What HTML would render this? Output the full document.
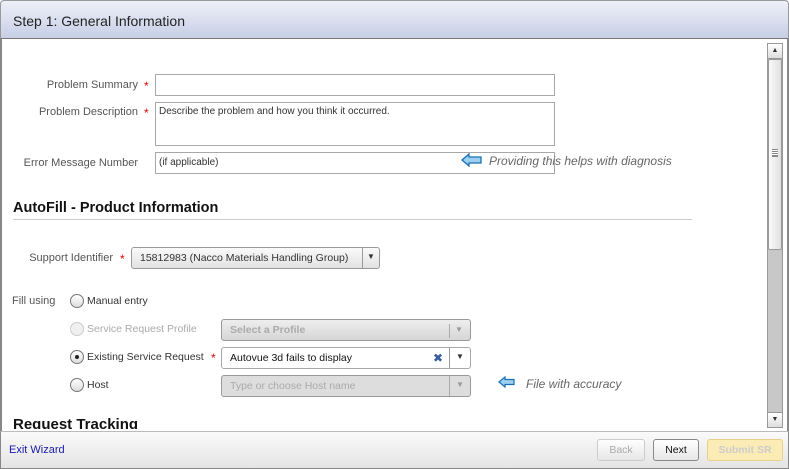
<!DOCTYPE html>
<html><head><style>
*{box-sizing:border-box;margin:0;padding:0}
body{width:789px;height:469px;overflow:hidden;background:#fff;font-family:"Liberation Sans",Arial,sans-serif;font-size:11px;color:#333;position:relative}
.a{position:absolute}
.lbl{position:absolute;color:#555;text-align:right;font-size:11px}
.star{position:absolute;color:#d00;font-size:12px}
.inp{position:absolute;border:1px solid #a8a8a8;background:#fff;font-size:10px;padding:3px 3px;color:#333}
.sel{position:absolute;border:1px solid #999;border-radius:3px;font-size:10.5px;padding:4px 8px;background:linear-gradient(#fafafa,#e2e2e2)}
.btn{position:absolute;border:1px solid #888;border-radius:3px;font-size:10.5px;text-align:center;line-height:20px;background:linear-gradient(#fff,#e6e6e6)}
.radio{position:absolute;width:14px;height:14px;border-radius:50%;border:1px solid #777;background:linear-gradient(#fff,#ddd)}
.rl{position:absolute;font-size:10.5px}
</style></head><body>
<div class="a" style="left:0;top:0;width:789px;height:39px;background:linear-gradient(#eef0f8,#c7cfe6);border:1px solid #999;border-bottom:1px solid #777;border-radius:4px 4px 0 0"></div>
<div class="a" style="left:13px;top:13px;font-size:14px;color:#222">Step 1: General Information</div>
<div class="a" style="left:0;top:39px;width:2px;height:393px;background:#888"></div>
<div class="a" style="left:787px;top:39px;width:2px;height:393px;background:#888"></div>

<div class="lbl" style="left:20px;top:79px;width:118px">Problem Summary</div><div class="star" style="left:144px;top:79px">*</div>
<div class="inp" style="left:155px;top:74px;width:400px;height:22px"></div>
<div class="lbl" style="left:20px;top:106px;width:118px">Problem Description</div><div class="star" style="left:144px;top:106px">*</div>
<div class="inp" style="left:155px;top:102px;width:400px;height:44px">Describe the problem and how you think it occurred.</div>
<div class="lbl" style="left:10px;top:157px;width:128px">Error Message Number</div>
<div class="inp" style="left:155px;top:152px;width:400px;height:22px;padding-top:4px">(if applicable)</div>
<svg class="a" style="left:461px;top:153px" width="22" height="14"><path d="M1 7 L8 1 V4 H20 V10 H8 V13 Z" fill="#9cd0f0" stroke="#1a6fb5" stroke-width="1.3"/></svg>
<div class="a" style="left:489px;top:154px;font-style:italic;color:#666;font-size:12px">Providing this helps with diagnosis</div>

<div class="a" style="left:13px;top:200px;font-size:14.5px;font-weight:bold;color:#111">AutoFill - Product Information</div>
<div class="a" style="left:13px;top:219px;width:679px;height:1px;background:#ccc"></div>

<div class="lbl" style="left:10px;top:252px;width:103px">Support Identifier</div><div class="star" style="left:120px;top:252px">*</div>
<div class="sel" style="left:131px;top:247px;width:249px;height:22px">15812983 (Nacco Materials Handling Group)</div>
<div class="a" style="left:362px;top:248px;width:1px;height:20px;background:#999"></div>
<div class="a" style="left:367px;top:252px;font-size:8px">▼</div>

<div class="a" style="left:12px;top:295px;color:#555">Fill using</div>
<div class="radio" style="left:70px;top:294px"></div><div class="rl" style="left:87px;top:295px">Manual entry</div>
<div class="radio" style="left:70px;top:322px;border-color:#ccc;background:#f0f0f0"></div><div class="rl" style="left:87px;top:323px;color:#aaa">Service Request Profile</div>
<div class="radio" style="left:70px;top:350px"></div><div class="a" style="left:75px;top:355px;width:4px;height:4px;border-radius:50%;background:#222"></div><div class="rl" style="left:87px;top:351px">Existing Service Request</div>
<div class="radio" style="left:70px;top:378px"></div><div class="rl" style="left:87px;top:379px">Host</div>

<div class="sel" style="left:221px;top:319px;width:250px;height:22px;color:#aaa;font-weight:bold;background:linear-gradient(#eee,#d6d6d6)">Select a Profile</div>
<div class="a" style="left:449px;top:324px;width:1px;height:14px;background:#aaa"></div><div class="a" style="left:455px;top:325px;font-size:8px;color:#999">▼</div>
<div class="star" style="left:211px;top:351px">*</div>
<div class="inp" style="left:221px;top:347px;width:250px;height:22px;border-radius:3px;padding:4px 8px;font-size:10.5px;color:#111">Autovue 3d fails to display</div>
<div class="a" style="left:433px;top:351px;color:#3a5fa0;font-size:12px">✖</div>
<div class="a" style="left:449px;top:348px;width:1px;height:20px;background:#999"></div><div class="a" style="left:456px;top:352px;font-size:8px">▼</div>
<div class="sel" style="left:221px;top:375px;width:250px;height:22px;color:#aaa;background:#ddd">Type or choose Host name</div>
<div class="a" style="left:449px;top:376px;width:1px;height:20px;background:#aaa"></div><div class="a" style="left:456px;top:380px;font-size:8px;color:#999">▼</div>
<svg class="a" style="left:498px;top:376px" width="18" height="12"><path d="M1 6 L7 1 V3.5 H16 V8.5 H7 V11 Z" fill="#9cd0f0" stroke="#1a6fb5" stroke-width="1.2"/></svg>
<div class="a" style="left:526px;top:377px;font-style:italic;color:#666;font-size:12px">File with accuracy</div>

<div class="a" style="left:13px;top:414px;width:700px;height:15px;overflow:hidden"><div style="font-size:15px;font-weight:bold;color:#111;margin-top:2px">Request Tracking</div></div>

<div class="a" style="left:767px;top:43px;width:16px;height:385px;background:#c8c8c8;border:1px solid #999"></div>
<div class="a" style="left:767px;top:43px;width:16px;height:16px;background:linear-gradient(#fff,#ddd);border:1px solid #999;font-size:7px;text-align:center;line-height:14px">▲</div>
<div class="a" style="left:768px;top:59px;width:14px;height:191px;background:linear-gradient(90deg,#fafafa,#e0e0e0);border:1px solid #999;border-radius:2px"></div>
<div class="a" style="left:772px;top:149px;width:6px;height:8px;border-top:1px solid #888;border-bottom:1px solid #888;background:repeating-linear-gradient(#fff 0 1px,#888 1px 2px)"></div>
<div class="a" style="left:767px;top:412px;width:16px;height:16px;background:linear-gradient(#fff,#ddd);border:1px solid #999;font-size:7px;text-align:center;line-height:14px">▼</div>

<div class="a" style="left:0;top:431px;width:789px;height:38px;background:linear-gradient(#fafafa,#e4e4e4);border:1px solid #888;border-top:1px solid #bbb"></div>
<div class="a" style="left:9px;top:444px;color:#1a1aa8;font-size:11px">Exit Wizard</div>
<div class="btn" style="left:597px;top:439px;width:48px;height:22px;color:#aaa;border-color:#ccc">Back</div>
<div class="btn" style="left:653px;top:439px;width:46px;height:22px;color:#111">Next</div>
<div class="btn" style="left:707px;top:439px;width:76px;height:22px;color:#ccc;font-weight:bold;border-color:#e8d08a;background:#fbecb5">Submit SR</div>
</body></html>
